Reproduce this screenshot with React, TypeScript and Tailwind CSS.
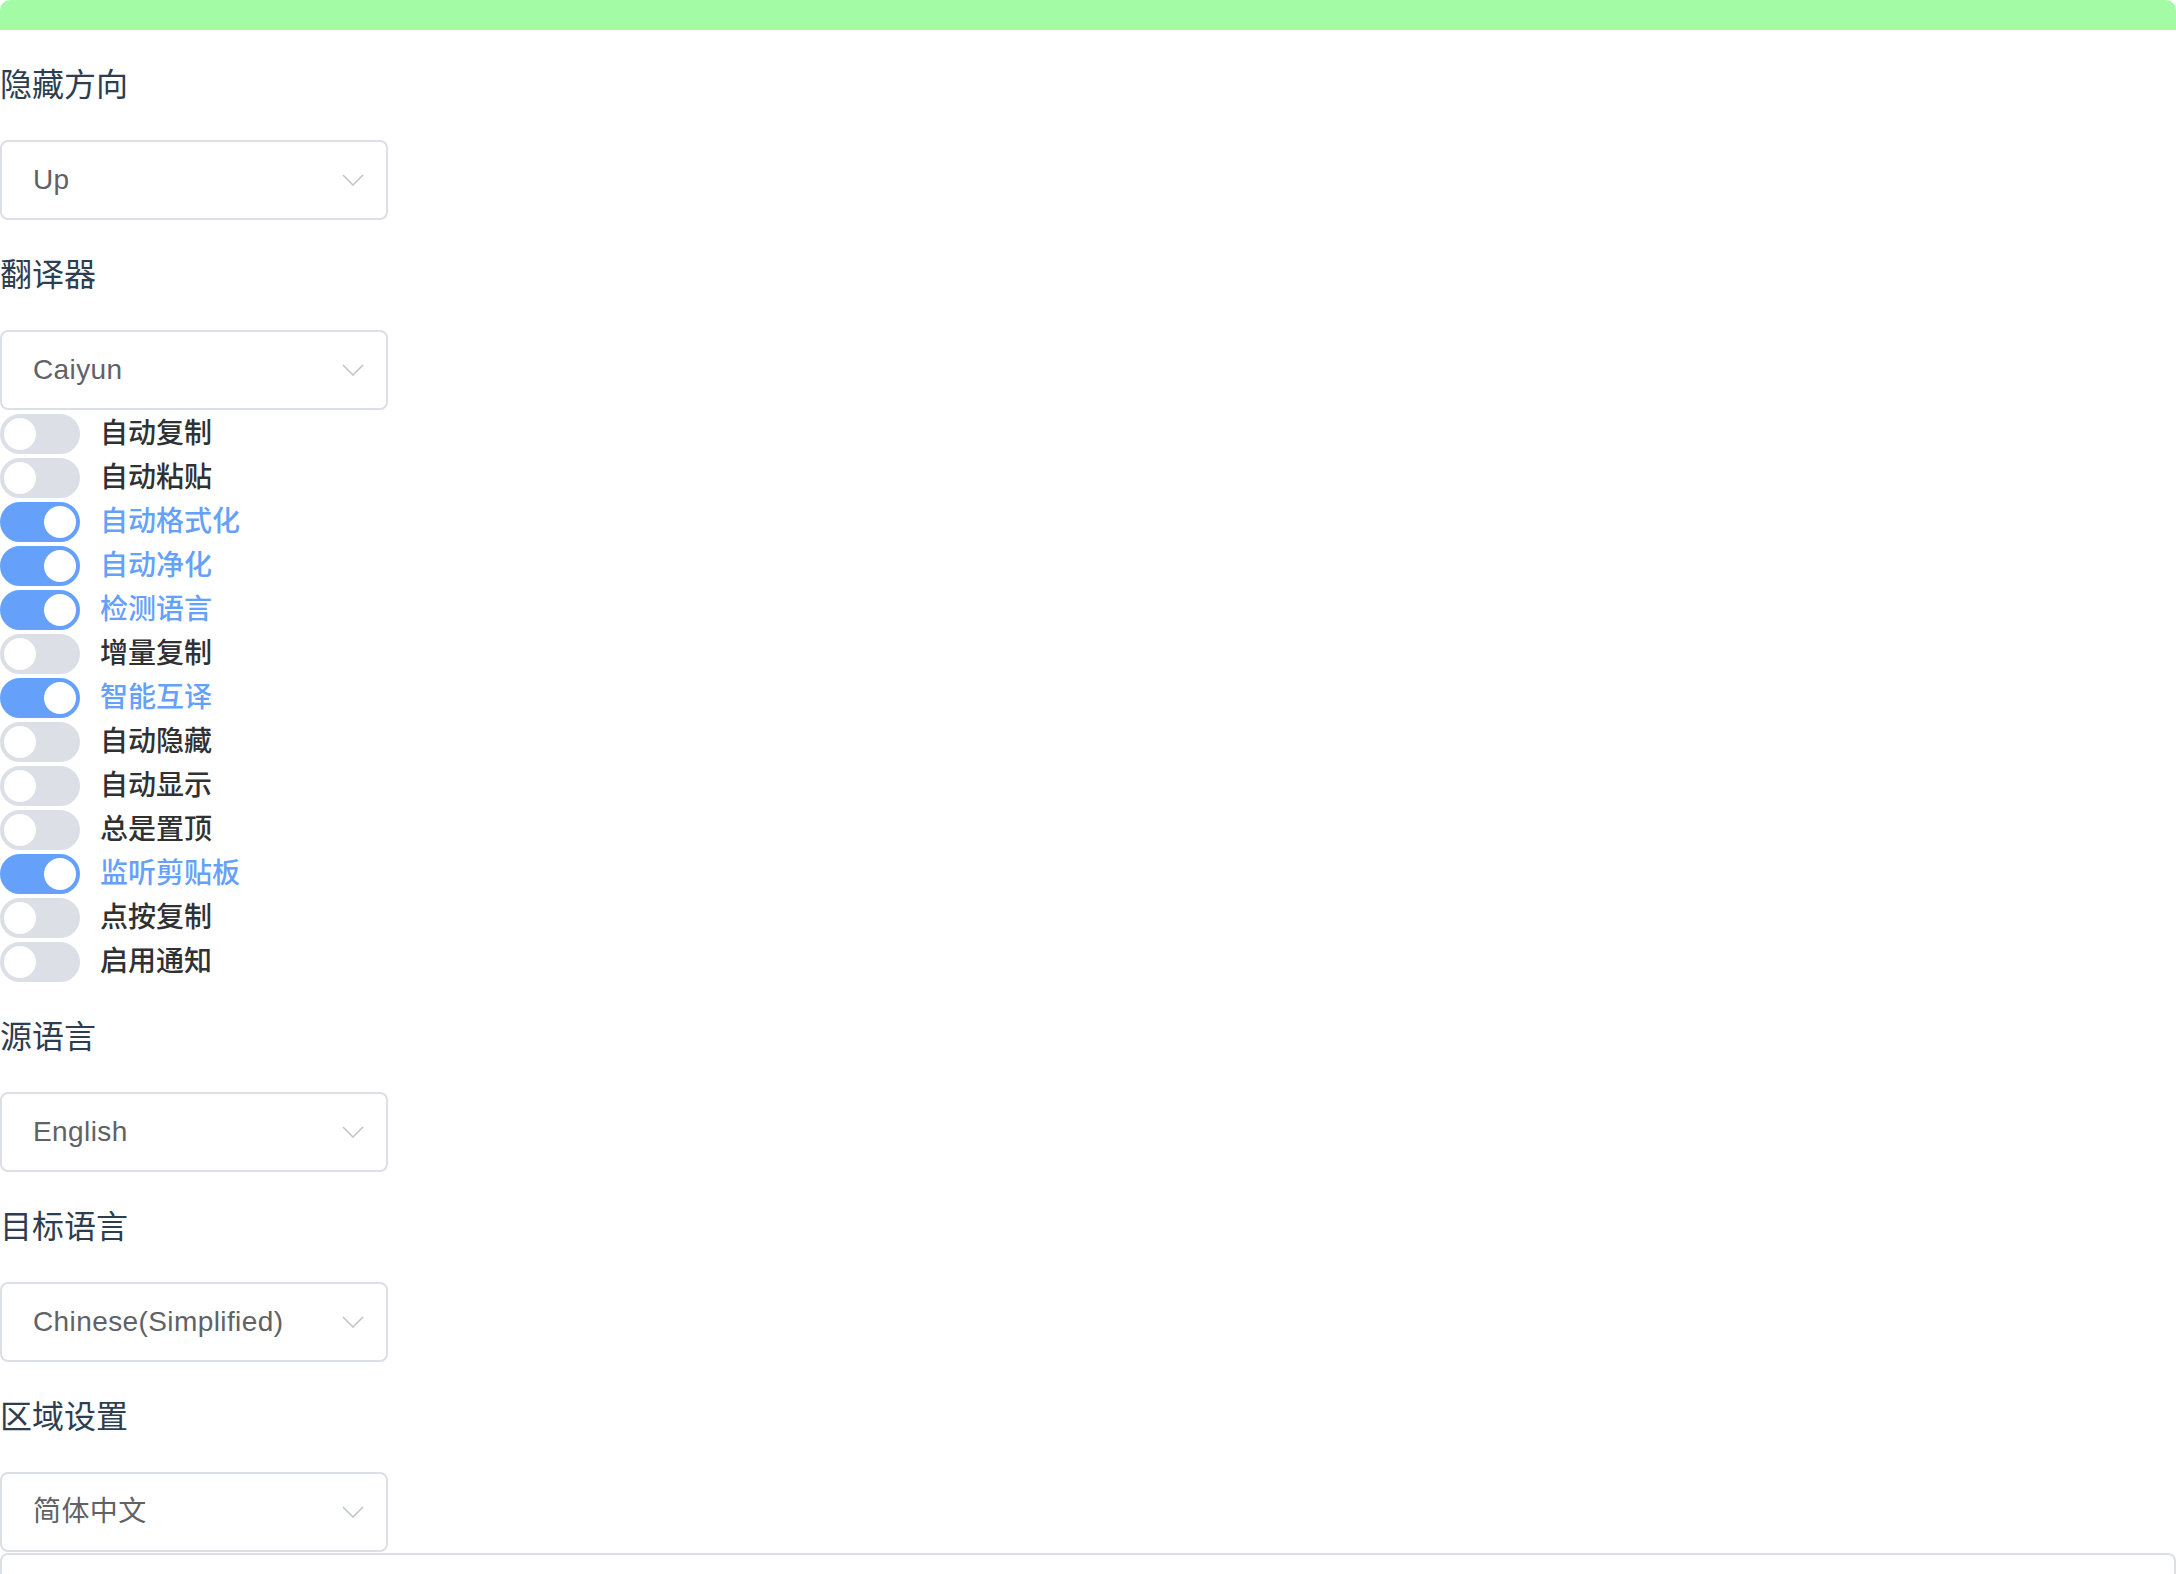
const labelFont = { fontFamily: '"Liberation Sans", "Noto Sans CJK SC", sans-serif' }

type Toggle = { label: string; on: boolean }

const toggles: Toggle[] = [
  { label: "自动复制", on: false },
  { label: "自动粘贴", on: false },
  { label: "自动格式化", on: true },
  { label: "自动净化", on: true },
  { label: "检测语言", on: true },
  { label: "增量复制", on: false },
  { label: "智能互译", on: true },
  { label: "自动隐藏", on: false },
  { label: "自动显示", on: false },
  { label: "总是置顶", on: false },
  { label: "监听剪贴板", on: true },
  { label: "点按复制", on: false },
  { label: "启用通知", on: false },
]

function FieldLabel({ children }: { children: React.ReactNode }) {
  return <div className="my-[31px] text-[32px] leading-[48px] text-[#2c3e50]">{children}</div>
}

function Select({ value }: { value: string }) {
  return (
    <div className="flex h-[80px] w-[388px] items-center justify-between rounded-[8px] border-2 border-[#dcdfe6] bg-white pl-[31px] pr-[22px]">
      <span className="text-[28px] tracking-[0.4px] text-[#606266]">{value}</span>
      <svg width="22" height="12" viewBox="0 0 22 12" fill="none">
        <polyline points="1,1 11,11 21,1" stroke="#c0c4cc" strokeWidth="1.6" />
      </svg>
    </div>
  )
}

function Switch({ label, on }: Toggle) {
  return (
    <div className="h-[44px] pt-[4px]">
      <div className="flex h-[40px] items-center">
        <div
          className={
            on
              ? "relative h-[40px] w-[80px] rounded-full border-2 border-[#65a1fa] bg-[#65a1fa]"
              : "relative h-[40px] w-[80px] rounded-full border-2 border-[#dcdfe6] bg-[#dcdfe6]"
          }
        >
          <div
            className={
              on
                ? "absolute left-[42px] top-[2px] h-[32px] w-[32px] rounded-full bg-white"
                : "absolute left-[2px] top-[2px] h-[32px] w-[32px] rounded-full bg-white"
            }
          />
        </div>
        <span
          className={
            on
              ? "ml-[20px] text-[28px] font-medium leading-[40px] text-[#65a1fa]"
              : "ml-[20px] text-[28px] font-medium leading-[40px] text-[#303133]"
          }
        >
          {label}
        </span>
      </div>
    </div>
  )
}

export default function App() {
  return (
    <div className="min-h-screen bg-white" style={labelFont}>
      <div className="h-[30px] rounded-t-[10px] bg-[#a3fba5]" />

      <FieldLabel>隐藏方向</FieldLabel>
      <Select value="Up" />

      <FieldLabel>翻译器</FieldLabel>
      <Select value="Caiyun" />

      <div>
        {toggles.map((t) => (
          <Switch key={t.label} label={t.label} on={t.on} />
        ))}
      </div>

      <FieldLabel>源语言</FieldLabel>
      <Select value="English" />

      <FieldLabel>目标语言</FieldLabel>
      <Select value="Chinese(Simplified)" />

      <FieldLabel>区域设置</FieldLabel>
      <Select value="简体中文" />

      <div className="mt-[1px] h-[80px] rounded-[8px] border-2 border-[#dcdfe6]" />
    </div>
  )
}
